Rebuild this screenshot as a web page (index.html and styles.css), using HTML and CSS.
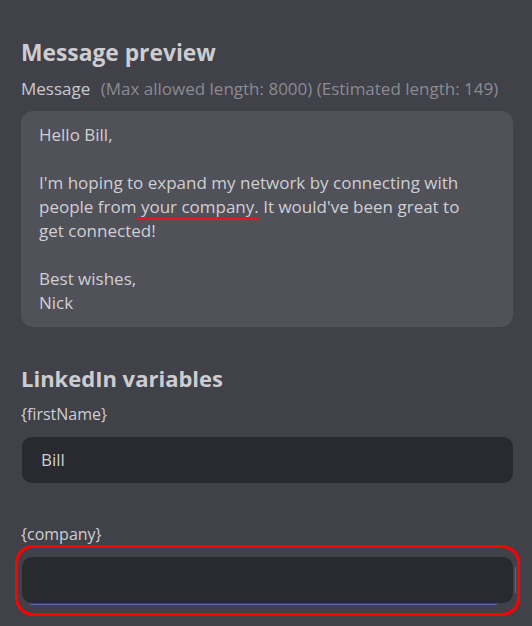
FILE: index.html
```html
<!DOCTYPE html>
<html lang="en">
<head>
    <meta charset="UTF-8">
    <meta name="viewport" content="width=device-width, initial-scale=1.0">
    <title>Message preview</title>
    <link rel="stylesheet" href="styles.css">
</head>
<body>

    <section class="panel">
        <h2 class="title">Message preview</h2>
        <div class="label">Message <span class="hint">(Max allowed length: 8000) (Estimated length: 149)</span></div>
        <div class="message">Hello Bill,

I'm hoping to expand my network by connecting with people from<span class="mark"> your company.</span> It would've been great to get connected!

Best wishes,
Nick</div>
    </section>

    <section class="panel vars">
        <h2 class="title">LinkedIn variables</h2>

        <div class="field">
            <label class="var-label" for="firstName">{firstName}</label>
            <div class="input">Bill</div>
        </div>

        <div class="field company">
            <label class="var-label" for="company">{company}</label>
            <div class="input focused" id="company"></div>
            <!-- Markierung um das leere Feld -->
            <div class="highlight"></div>
        </div>
    </section>

</body>
</html>
```

FILE: styles.css
```css
body {
    margin: 0;
    padding: 39px 19px 40px 21px;
    background-color: #414149;
    color: #cfcfd2;
    font-family: "Open Sans", "Noto Sans", sans-serif;
}

.title {
    margin: 0;
    font-size: 22.8px;
    line-height: 28px;
    font-weight: 700;
    color: #cdcdd0;
}

.vars .title {
    font-size: 22px;
}

.label {
    margin-top: 11px;
    font-size: 17px;
    line-height: 22px;
    color: #c9c9cc;
}

.hint {
    margin-left: 6px;
    color: #8b8b91;
}

.message {
    margin-top: 11px;
    padding: 12px 40px 12px 18px;
    background-color: #51515a;
    border-radius: 12px;
    font-size: 17px;
    line-height: 24px;
    white-space: pre-wrap;
    color: #cfcfd2;
}

.mark {
    text-decoration: underline;
    text-decoration-color: #e8161b;
    text-decoration-thickness: 2px;
    text-underline-offset: 5px;
}

.vars {
    margin-top: 37px;
}

.field {
    position: relative;
}

.var-label {
    display: block;
    margin-top: 11px;
    font-size: 16px;
    line-height: 22px;
    color: #cfcfd2;
}

.input {
    margin-top: 12px;
    margin-left: 1px;
    height: 46px;
    padding: 0 19px;
    box-sizing: border-box;
    background-color: #292a2f;
    border-radius: 10px;
    font-size: 17px;
    line-height: 46px;
    color: #cfcfd2;
}

.company .var-label {
    margin-top: 40px;
}

.focused {
    position: relative;
}

.focused::before {
    content: "";
    position: absolute;
    left: 8px;
    right: 16px;
    bottom: -2px;
    border-bottom: 1px solid #5867a6;
}

.focused::after {
    content: "";
    position: absolute;
    right: -3px;
    top: 10px;
    bottom: 10px;
    border-right: 1px solid #5867a6;
}

.highlight {
    position: absolute;
    left: -6px;
    right: -7px;
    top: 22px;
    height: 71px;
    box-sizing: border-box;
    border: 3px solid #f00;
    border-radius: 18px;
}
```
